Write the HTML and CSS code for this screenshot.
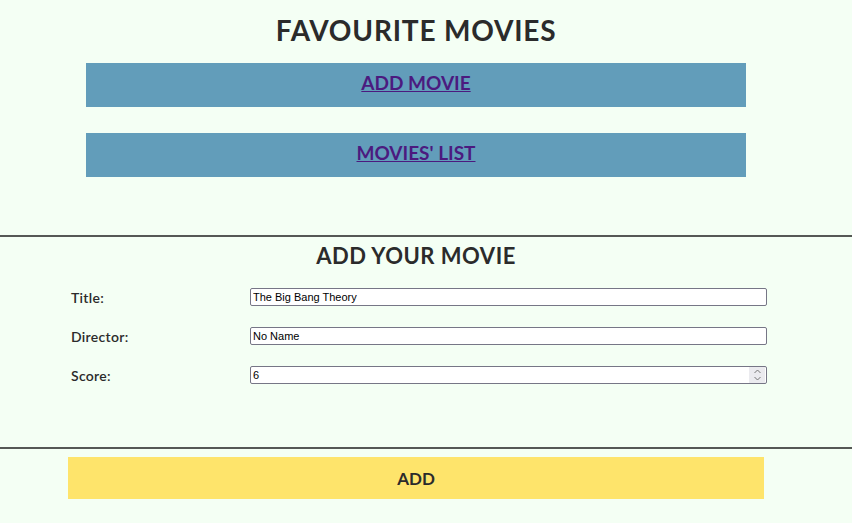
FILE: index.html
```html
<!DOCTYPE html>
<html lang="en">
<head>
    <meta charset="UTF-8">
    <meta name="viewport" content="width=device-width, initial-scale=1.0">
    <title>Favourite Movies</title>
    <link rel="stylesheet" href="styles.css">
</head>
<body>
    <div class="header">
        <h1>Favourite Movies</h1>
        <nav class="nav">
            <div class="nav-item"><a href="#add">Add Movie</a></div>
            <div class="nav-item"><a href="#list">Movies' List</a></div>
        </nav>
    </div>
    <hr>
    <form class="movie-form" id="add">
        <h2>Add Your Movie</h2>
        <div class="fields">
            <label for="title">Title:</label>
            <input type="text" id="title" value="The Big Bang Theory">
            <label for="director">Director:</label>
            <input type="text" id="director" value="No Name">
            <label for="score">Score:</label>
            <span class="number-wrap">
                <input type="number" id="score" value="6">
                <span class="spinner">
                    <svg width="9" height="14" viewBox="0 0 9 14">
                        <path d="M1.5 5 L4.5 2 L7.5 5 M1.5 9 L4.5 12 L7.5 9" fill="none" stroke="#777" stroke-width="1"/>
                    </svg>
                </span>
            </span>
        </div>
    </form>
    <hr>
    <div class="submit-row">
        <button class="add-button" type="button">ADD</button>
    </div>
</body>
</html>
```

FILE: styles.css
```css
body {
    margin: 0;
    background-color: #f4fff4;
    font-family: Lato, "Open Sans", sans-serif;
    color: #2b2b2b;
}
.header {
    padding-top: 12px;
    height: 235px;
    box-sizing: border-box;
    margin-right: 20px;
}
h1 {
    margin: 0;
    text-align: center;
    font-size: 28px;
    letter-spacing: 0.8px;
    text-transform: uppercase;
    line-height: 36px;
}
.nav {
    display: flex;
    flex-direction: column;
    gap: 26px;
    width: 660px;
    margin: 15px 0 0 86px;
}
.nav-item {
    height: 44px;
    box-sizing: border-box;
    padding-bottom: 6px;
    background-color: #629dba;
    display: flex;
    justify-content: center;
    align-items: center;
}
.nav-item a {
    color: #4b1a7f;
    font-size: 19px;
    font-weight: bold;
    text-transform: uppercase;
}
hr {
    margin: 0;
    border: none;
    border-top: 2px solid #555855;
}
.movie-form {
    height: 210px;
    box-sizing: border-box;
    padding-top: 4px;
}
h2 {
    margin: 0 20px 0 0;
    text-align: center;
    font-size: 22px;
    letter-spacing: 0.5px;
    text-transform: uppercase;
    line-height: 30px;
}
.fields {
    display: grid;
    grid-template-columns: 179px 517px;
    row-gap: 21px;
    align-items: center;
    padding-left: 71px;
    margin-top: 17px;
}
.fields label {
    font-size: 14px;
    font-weight: 600;
    letter-spacing: 0.3px;
}
.fields input {
    width: 100%;
    height: 18px;
    box-sizing: border-box;
    margin: 0;
    padding: 1px 2px;
    font-family: "Liberation Sans", Arial, sans-serif;
    font-size: 11px;
    border: 1px solid #767686;
    border-radius: 2px;
    background-color: #fff;
}
.number-wrap {
    position: relative;
    display: flex;
    height: 18px;
}
.number-wrap input::-webkit-inner-spin-button {
    display: none;
}
.spinner {
    position: absolute;
    top: 1px;
    right: 2px;
    width: 16px;
    height: 16px;
    background-color: #ebebef;
    display: flex;
    justify-content: center;
    align-items: center;
}
.submit-row {
    padding: 8px 0 0 68px;
}
.add-button {
    width: 696px;
    height: 42px;
    border: none;
    background-color: #fee46b;
    font-family: Lato, "Open Sans", sans-serif;
    font-weight: bold;
    font-size: 17px;
    color: #2b2b2b;
}
```
